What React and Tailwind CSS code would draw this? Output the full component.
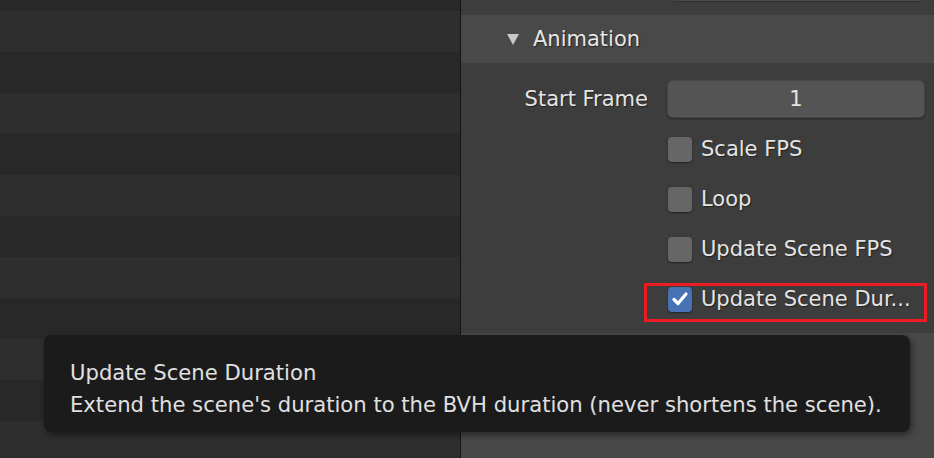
import React from "react";

const font = { fontFamily: '"DejaVu Sans", "Liberation Sans", sans-serif' };

function Stripes() {
  const rows = [];
  for (let i = 0; i < 11; i++) {
    rows.push(
      <div
        key={i}
        className={
          "h-[41px] shrink-0 " + (i % 2 === 0 ? "bg-[#2e2e2e]" : "bg-[#282828]")
        }
      />
    );
  }
  return (
    <div className="flex h-full w-[460px] shrink-0 flex-col overflow-hidden">
      <div className="h-[11px] shrink-0 bg-[#282828]" />
      {rows}
    </div>
  );
}

function Check({ checked }) {
  return (
    <div
      className={
        "flex h-[25px] w-[24px] shrink-0 items-center justify-center rounded-[4px] shadow-[0_1px_2px_rgba(0,0,0,0.45)] " +
        (checked ? "bg-[#4772b3]" : "bg-[#666666]")
      }
    >
      {checked && (
        <svg width="20" height="20" viewBox="0 0 20 20">
          <path
            d="M4 10.5 L8 14.5 L16 5"
            fill="none"
            stroke="#ffffff"
            strokeWidth="3.2"
            strokeLinecap="round"
            strokeLinejoin="round"
          />
        </svg>
      )}
    </div>
  );
}

function CheckRow({ label, checked }) {
  return (
    <div className="flex h-[50px] items-center pl-[207px]">
      <Check checked={checked} />
      <span className="ml-[9px] whitespace-nowrap text-[#e4e4e4] [text-shadow:1px_1px_1px_rgba(0,0,0,0.45)]">
        {label}
      </span>
    </div>
  );
}

export default function App() {
  return (
    <div
      className="relative flex h-[458px] w-[934px] overflow-hidden bg-[#282828] text-[21px] leading-[32px]"
      style={font}
    >
      <Stripes />
      <div className="w-px shrink-0 bg-[#151515]" />
      <div className="flex flex-1 flex-col bg-[#3d3d3d]">
        <div className="h-[15px] shrink-0">
          <div className="ml-[212px] mr-[12px] h-[2px] rounded-b-[3px] border-b border-[#2e2e2e] bg-[#4a4a4a]" />
        </div>
        <div className="flex h-[48px] shrink-0 items-center bg-[#494949] pl-[46px]">
          <svg width="12" height="11" viewBox="0 0 12 11">
            <path d="M0 0 H12 L6 11 Z" fill="#c8c8c8" />
          </svg>
          <span className="ml-[14px] text-[#e6e6e6] [text-shadow:1px_1px_1px_rgba(0,0,0,0.5)]">
            Animation
          </span>
        </div>
        <div className="flex h-[270px] shrink-0 flex-col pt-[11px]">
          <div className="flex h-[50px] items-center">
            <div className="w-[187px] shrink-0 text-right text-[#e4e4e4] [text-shadow:1px_1px_1px_rgba(0,0,0,0.45)]">
              Start Frame
            </div>
            <div className="ml-[19px] mr-[9px] flex h-[38px] flex-1 items-center justify-center rounded-[6px] border border-[#474747] bg-[#545454] text-[#e4e4e4] shadow-[0_1px_2px_rgba(0,0,0,0.4)]">
              1
            </div>
          </div>
          <CheckRow label="Scale FPS" />
          <CheckRow label="Loop" />
          <CheckRow label="Update Scene FPS" />
          <div className="relative">
            <CheckRow label="Update Scene Dur..." checked />
            <div className="absolute left-[183px] top-[9px] h-[39px] w-[283px] border-[3px] border-[#ec1c24]" />
          </div>
        </div>
        <div className="flex-1 bg-[#484848]" />
      </div>

      <div className="absolute left-[44px] top-[335px] h-[97px] w-[866px] rounded-[8px] bg-[#1b1b1b] pl-[26px] pt-[22px] text-[21.15px] text-[#e0e0e0] shadow-[2px_3px_6px_rgba(0,0,0,0.45)]">
        <div className="whitespace-nowrap">Update Scene Duration</div>
        <div className="whitespace-nowrap">
          Extend the scene's duration to the BVH duration (never shortens the scene).
        </div>
      </div>
    </div>
  );
}
